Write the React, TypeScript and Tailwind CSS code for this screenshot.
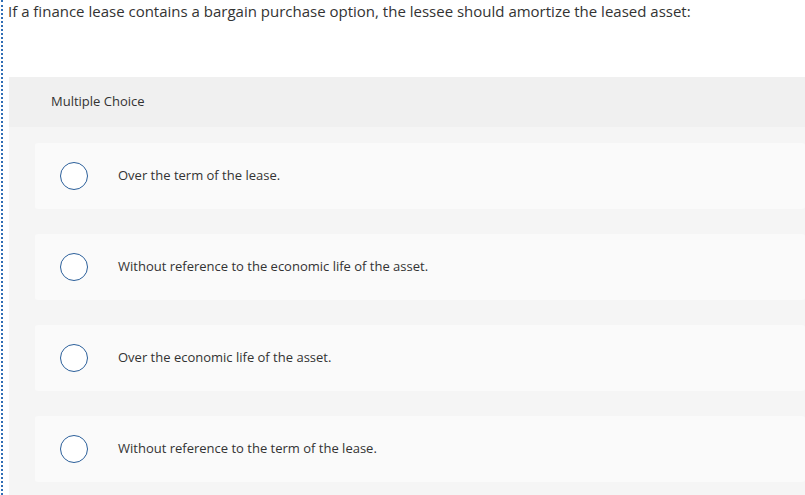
const options = [
  'Over the term of the lease.',
  'Without reference to the economic life of the asset.',
  'Over the economic life of the asset.',
  'Without reference to the term of the lease.',
]

export default function App() {
  return (
    <div className="flex h-[495px] w-[805px] overflow-hidden bg-white font-['Open_Sans','Liberation_Sans',sans-serif] text-[#333]">
      <div className="ml-[1px] border-l-2 border-dotted border-[#2f6db5]" />
      <div className="flex flex-1 flex-col">
        <p className="pl-[5px] pt-[2px] text-[15px] leading-[18px]">
          If a finance lease contains a bargain purchase option, the lessee should amortize the leased asset:
        </p>
        <div className="ml-[6px] mt-[57px] flex flex-1 flex-col bg-[#f5f5f5]">
          <div className="flex h-[50px] items-center bg-[#f0f0f0] pl-[42px] text-[13px]">
            Multiple Choice
          </div>
          <div className="flex flex-col gap-[25px] pt-[16px]">
            {options.map((opt) => (
              <label
                key={opt}
                className="ml-[26px] flex h-[66px] items-center rounded-[3px] bg-[#fafafa]"
              >
                <span className="ml-[25px] h-[28px] w-[28px] rounded-full border-[1.5px] border-[#2b5f9a] bg-white" />
                <span className="ml-[30px] text-[13px]">{opt}</span>
              </label>
            ))}
          </div>
        </div>
      </div>
    </div>
  )
}
